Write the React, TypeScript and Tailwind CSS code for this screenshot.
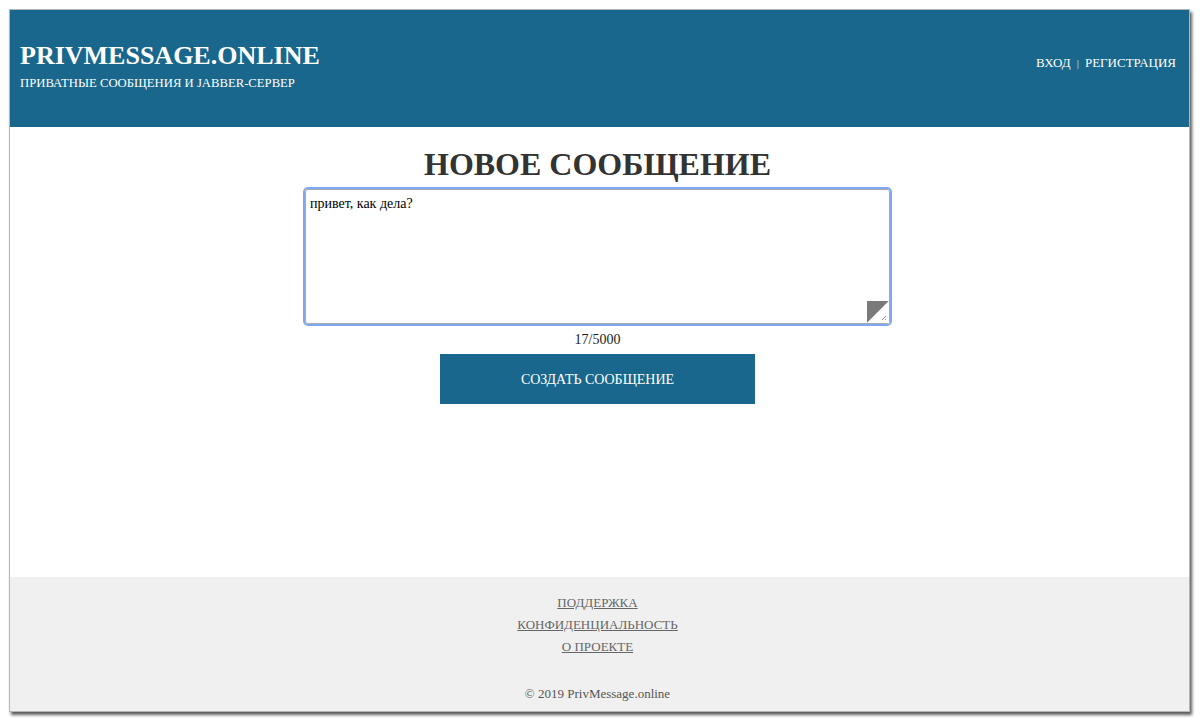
import React from 'react';

const serif = "font-['Liberation_Serif','Times_New_Roman',serif]";

const ResizeCorner: React.FC = () => (
  <svg
    className="absolute right-[1px] bottom-[1px] pointer-events-none"
    width="22"
    height="22"
    viewBox="0 0 22 22"
  >
    <polygon points="0,0 22,0 0,22" fill="#7a7a7a" />
    <polygon points="22,0 22,22 0,22" fill="#ffffff" />
    <line x1="19" y1="15" x2="15" y2="19" stroke="#8a8a8a" strokeWidth="1" />
    <line x1="19" y1="18" x2="18" y2="19" stroke="#8a8a8a" strokeWidth="1" />
  </svg>
);

const App: React.FC = () => {
  const message = 'привет, как дела?';

  return (
    <div className={`w-[1200px] h-[722px] bg-white ${serif}`}>
      <div className="ml-[9px] pt-[9px]">
        <div className="w-[1181px] h-[703px] border border-[#b5b5b5] shadow-[2px_3px_3px_rgba(0,0,0,0.65)] flex flex-col bg-white">
          {/* Header */}
          <header className="h-[117px] bg-[#19678c] text-white flex justify-between items-start px-[10px] pt-[31px]">
            <div>
              <div className="text-[26px] leading-[30px] font-bold">PRIVMESSAGE.ONLINE</div>
              <div className="text-[12.7px] leading-[14px] mt-[5px]">ПРИВАТНЫЕ СООБЩЕНИЯ И JABBER-СЕРВЕР</div>
            </div>
            <nav className="mt-[14px] mr-[3px] text-[13px] leading-[16px] flex items-center">
              <a href="#">ВХОД</a>
              <span className="mx-[6px] text-[11px] text-white/80">|</span>
              <a href="#">РЕГИСТРАЦИЯ</a>
            </nav>
          </header>

          {/* Main */}
          <main className="flex-1 flex flex-col items-center pt-[19px] pr-[4px]">
            <h1 className="text-[32px] leading-[36px] font-bold text-[#333]">НОВОЕ СООБЩЕНИЕ</h1>
            <div className="relative mt-[7px]">
              <textarea
                defaultValue={message}
                className="block w-[585px] h-[135px] resize-none border border-[#a9a9a9] rounded-[3px] outline-none ring-[2px] ring-[#7fa8f3] pt-[6px] px-[4px] text-[14px] leading-[16px] text-black"
              />
              <ResizeCorner />
            </div>
            <div className="mt-[8px] text-[14px] leading-[16px] text-[#222]">{message.length}/5000</div>
            <button className="mt-[6px] w-[315px] h-[50px] bg-[#19678c] text-white text-[14px]">
              СОЗДАТЬ СООБЩЕНИЕ
            </button>
          </main>

          {/* Footer */}
          <footer className="h-[134px] bg-[#f0f0f0] flex flex-col items-center pt-[15px] pr-[4px]">
            <div className="flex flex-col items-center text-[13px] leading-[22px] text-[#666]">
              <a href="#" className="underline">ПОДДЕРЖКА</a>
              <a href="#" className="underline">КОНФИДЕНЦИАЛЬНОСТЬ</a>
              <a href="#" className="underline">О ПРОЕКТЕ</a>
            </div>
            <div className="mt-[28px] text-[13px] leading-[16px] text-[#555]">© 2019 PrivMessage.online</div>
          </footer>
        </div>
      </div>
    </div>
  );
};

export default App;
